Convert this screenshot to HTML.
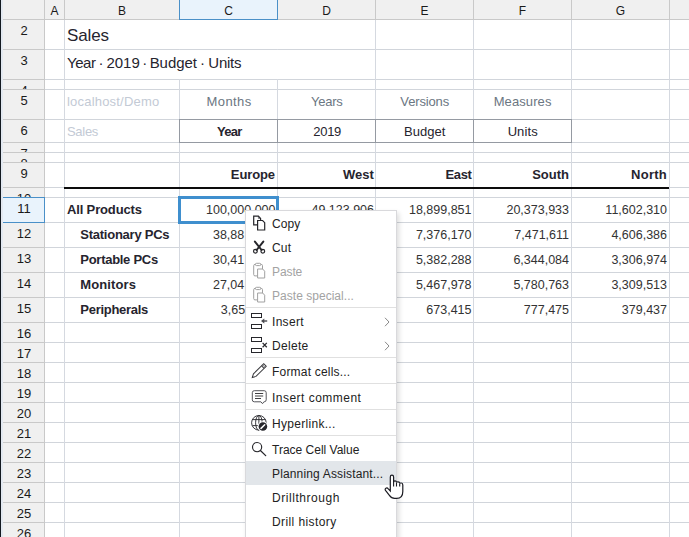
<!DOCTYPE html>
<html><head><meta charset="utf-8"><title>Sales</title>
<style>
html,body{margin:0;padding:0;background:#fff;}
body{width:689px;height:537px;overflow:hidden;position:relative;font-family:"Liberation Sans", sans-serif;color:#222;}
.abs{position:absolute;}
.t{position:absolute;white-space:nowrap;line-height:20px;height:20px;}
.rh{position:absolute;left:3px;width:42px;text-align:center;font-size:13px;color:#1a1a1a;line-height:20px;height:20px;}
.ch{position:absolute;top:1px;text-align:center;font-size:12px;color:#1a1a1a;line-height:20px;height:20px;}
.b{font-weight:bold;}
.mi{position:absolute;left:26px;font-size:12px;color:#222;white-space:nowrap;line-height:20px;height:20px;}
.dis{color:#a3a3a3;}
.sep{position:absolute;left:0;right:0;height:1px;background:#e0e0e0;}
svg{position:absolute;overflow:visible;}

</style></head>
<body>
<div class="abs" style="left:0;top:0;width:689px;height:19px;background:#f0f0f0"></div>
<div class="abs" style="left:0;top:0;width:44px;height:537px;background:#f0f0f0"></div>
<div class="abs" style="left:45px;top:19px;width:644px;height:1px;background:#d1d5db"></div>
<div class="abs" style="left:3px;top:19px;width:41px;height:1px;background:#c9c9c9"></div>
<div class="abs" style="left:45px;top:49px;width:644px;height:1px;background:#d1d5db"></div>
<div class="abs" style="left:3px;top:49px;width:41px;height:1px;background:#c9c9c9"></div>
<div class="abs" style="left:45px;top:79px;width:644px;height:1px;background:#d1d5db"></div>
<div class="abs" style="left:3px;top:79px;width:41px;height:1px;background:#c9c9c9"></div>
<div class="abs" style="left:45px;top:89px;width:644px;height:1px;background:#d1d5db"></div>
<div class="abs" style="left:3px;top:89px;width:41px;height:1px;background:#c9c9c9"></div>
<div class="abs" style="left:45px;top:119px;width:644px;height:1px;background:#d1d5db"></div>
<div class="abs" style="left:3px;top:119px;width:41px;height:1px;background:#c9c9c9"></div>
<div class="abs" style="left:45px;top:142px;width:644px;height:1px;background:#d1d5db"></div>
<div class="abs" style="left:3px;top:142px;width:41px;height:1px;background:#c9c9c9"></div>
<div class="abs" style="left:45px;top:152px;width:644px;height:1px;background:#d1d5db"></div>
<div class="abs" style="left:3px;top:152px;width:41px;height:1px;background:#c9c9c9"></div>
<div class="abs" style="left:45px;top:162px;width:644px;height:1px;background:#d1d5db"></div>
<div class="abs" style="left:3px;top:162px;width:41px;height:1px;background:#c9c9c9"></div>
<div class="abs" style="left:45px;top:187px;width:644px;height:1px;background:#d1d5db"></div>
<div class="abs" style="left:3px;top:187px;width:41px;height:1px;background:#c9c9c9"></div>
<div class="abs" style="left:45px;top:197px;width:644px;height:1px;background:#d1d5db"></div>
<div class="abs" style="left:3px;top:197px;width:41px;height:1px;background:#c9c9c9"></div>
<div class="abs" style="left:45px;top:222px;width:644px;height:1px;background:#d1d5db"></div>
<div class="abs" style="left:3px;top:222px;width:41px;height:1px;background:#c9c9c9"></div>
<div class="abs" style="left:45px;top:247px;width:644px;height:1px;background:#d1d5db"></div>
<div class="abs" style="left:3px;top:247px;width:41px;height:1px;background:#c9c9c9"></div>
<div class="abs" style="left:45px;top:272px;width:644px;height:1px;background:#d1d5db"></div>
<div class="abs" style="left:3px;top:272px;width:41px;height:1px;background:#c9c9c9"></div>
<div class="abs" style="left:45px;top:297px;width:644px;height:1px;background:#d1d5db"></div>
<div class="abs" style="left:3px;top:297px;width:41px;height:1px;background:#c9c9c9"></div>
<div class="abs" style="left:45px;top:322px;width:644px;height:1px;background:#d1d5db"></div>
<div class="abs" style="left:3px;top:322px;width:41px;height:1px;background:#c9c9c9"></div>
<div class="abs" style="left:45px;top:342px;width:644px;height:1px;background:#d1d5db"></div>
<div class="abs" style="left:3px;top:342px;width:41px;height:1px;background:#c9c9c9"></div>
<div class="abs" style="left:45px;top:362px;width:644px;height:1px;background:#d1d5db"></div>
<div class="abs" style="left:3px;top:362px;width:41px;height:1px;background:#c9c9c9"></div>
<div class="abs" style="left:45px;top:382px;width:644px;height:1px;background:#d1d5db"></div>
<div class="abs" style="left:3px;top:382px;width:41px;height:1px;background:#c9c9c9"></div>
<div class="abs" style="left:45px;top:402px;width:644px;height:1px;background:#d1d5db"></div>
<div class="abs" style="left:3px;top:402px;width:41px;height:1px;background:#c9c9c9"></div>
<div class="abs" style="left:45px;top:422px;width:644px;height:1px;background:#d1d5db"></div>
<div class="abs" style="left:3px;top:422px;width:41px;height:1px;background:#c9c9c9"></div>
<div class="abs" style="left:45px;top:442px;width:644px;height:1px;background:#d1d5db"></div>
<div class="abs" style="left:3px;top:442px;width:41px;height:1px;background:#c9c9c9"></div>
<div class="abs" style="left:45px;top:462px;width:644px;height:1px;background:#d1d5db"></div>
<div class="abs" style="left:3px;top:462px;width:41px;height:1px;background:#c9c9c9"></div>
<div class="abs" style="left:45px;top:482px;width:644px;height:1px;background:#d1d5db"></div>
<div class="abs" style="left:3px;top:482px;width:41px;height:1px;background:#c9c9c9"></div>
<div class="abs" style="left:45px;top:502px;width:644px;height:1px;background:#d1d5db"></div>
<div class="abs" style="left:3px;top:502px;width:41px;height:1px;background:#c9c9c9"></div>
<div class="abs" style="left:45px;top:522px;width:644px;height:1px;background:#d1d5db"></div>
<div class="abs" style="left:3px;top:522px;width:41px;height:1px;background:#c9c9c9"></div>
<div class="abs" style="left:3px;top:19px;width:689px;height:1px;background:#c9c9c9"></div>
<div class="abs" style="left:64px;top:20px;width:1px;height:537px;background:#d5d9e0"></div>
<div class="abs" style="left:64px;top:0;width:1px;height:19px;background:#c9c9c9"></div>
<div class="abs" style="left:179px;top:20px;width:1px;height:537px;background:#d5d9e0"></div>
<div class="abs" style="left:179px;top:0;width:1px;height:19px;background:#c9c9c9"></div>
<div class="abs" style="left:277px;top:20px;width:1px;height:537px;background:#d5d9e0"></div>
<div class="abs" style="left:277px;top:0;width:1px;height:19px;background:#c9c9c9"></div>
<div class="abs" style="left:375px;top:20px;width:1px;height:537px;background:#d5d9e0"></div>
<div class="abs" style="left:375px;top:0;width:1px;height:19px;background:#c9c9c9"></div>
<div class="abs" style="left:473px;top:20px;width:1px;height:537px;background:#d5d9e0"></div>
<div class="abs" style="left:473px;top:0;width:1px;height:19px;background:#c9c9c9"></div>
<div class="abs" style="left:571px;top:20px;width:1px;height:537px;background:#d5d9e0"></div>
<div class="abs" style="left:571px;top:0;width:1px;height:19px;background:#c9c9c9"></div>
<div class="abs" style="left:669px;top:20px;width:1px;height:537px;background:#d5d9e0"></div>
<div class="abs" style="left:669px;top:0;width:1px;height:19px;background:#c9c9c9"></div>
<div class="abs" style="left:44px;top:0;width:1px;height:537px;background:#c9c9c9"></div>
<div class="abs" style="left:65px;top:20px;width:310px;height:29px;background:#fff"></div>
<div class="abs" style="left:65px;top:50px;width:310px;height:29px;background:#fff"></div>
<div class="abs" style="left:0;top:0;width:3px;height:537px;background:#e3e9f1"></div>
<div class="abs" style="left:0;top:0;width:1px;height:537px;background:#131920"></div>
<div class="abs" style="left:179px;top:0;width:97px;height:19px;background:#e9f3fc;border:1px solid #4a90c8;border-top:none"></div>
<div class="ch" style="left:34.5px;width:40px">A</div>
<div class="ch" style="left:102px;width:40px">B</div>
<div class="ch" style="left:208.5px;width:40px">C</div>
<div class="ch" style="left:306.5px;width:40px">D</div>
<div class="ch" style="left:404.5px;width:40px">E</div>
<div class="ch" style="left:502.5px;width:40px">F</div>
<div class="ch" style="left:600.5px;width:40px">G</div>
<div class="abs" style="left:3px;top:197px;width:41px;height:24px;background:#e9f3fc;border:1px solid #4a90c8;border-left:none"></div>
<div class="rh" style="top:21px">2</div>
<div class="rh" style="top:51px">3</div>
<div class="rh" style="top:91px">5</div>
<div class="rh" style="top:121px">6</div>
<div class="rh" style="top:164px">9</div>
<div class="rh" style="top:199px">11</div>
<div class="rh" style="top:224px">12</div>
<div class="rh" style="top:249px">13</div>
<div class="rh" style="top:274px">14</div>
<div class="rh" style="top:299px">15</div>
<div class="rh" style="top:324px">16</div>
<div class="rh" style="top:344px">17</div>
<div class="rh" style="top:364px">18</div>
<div class="rh" style="top:384px">19</div>
<div class="rh" style="top:404px">20</div>
<div class="rh" style="top:424px">21</div>
<div class="rh" style="top:444px">22</div>
<div class="rh" style="top:464px">23</div>
<div class="rh" style="top:484px">24</div>
<div class="rh" style="top:504px">25</div>
<div class="rh" style="top:524px">26</div>
<div class="abs" style="left:3px;top:80px;width:42px;height:9px;overflow:hidden"><div class="rh" style="left:0;top:1px">4</div></div>
<div class="abs" style="left:3px;top:143px;width:42px;height:9px;overflow:hidden"><div class="rh" style="left:0;top:1px">7</div></div>
<div class="abs" style="left:3px;top:153px;width:42px;height:9px;overflow:hidden"><div class="rh" style="left:0;top:1px">8</div></div>
<div class="abs" style="left:3px;top:188px;width:42px;height:9px;overflow:hidden"><div class="rh" style="left:0;top:1px">10</div></div>
<div class="t" style="top:26px;font-size:17px;color:#26242e;letter-spacing:-0.1px;left:67px;">Sales</div>
<div class="t" style="top:53px;font-size:15px;color:#26242e;letter-spacing:-0.05px;word-spacing:-1.6px;left:67px;"><span style="letter-spacing:-0.45px">Year</span><span style="word-spacing:-1.1px"> · </span>2019 · Budget<span style="word-spacing:-0.9px"> · </span><span style="letter-spacing:-0.25px">Units</span></div>
<div class="t" style="top:92px;font-size:13px;color:#c3cad5;letter-spacing:0.2px;left:67px;">localhost/Demo</div>
<div class="t" style="top:122px;font-size:13px;color:#c3cad5;letter-spacing:-0.3px;left:67px;">Sales</div>
<div class="t" style="top:92px;font-size:13px;color:#6b7682;letter-spacing:0.4px;left:169.1px;width:120px;text-align:center;">Months</div>
<div class="t" style="top:92px;font-size:13px;color:#6b7682;letter-spacing:-0.2px;left:266.8px;width:120px;text-align:center;">Years</div>
<div class="t" style="top:92px;font-size:13px;color:#6b7682;letter-spacing:-0.15px;left:364.7px;width:120px;text-align:center;">Versions</div>
<div class="t" style="top:92px;font-size:13px;color:#6b7682;letter-spacing:0.1px;left:462.6px;width:120px;text-align:center;">Measures</div>
<div class="abs" style="left:179px;top:119px;width:393px;height:24px;border:1px solid #959aa2;box-sizing:border-box"></div>
<div class="abs" style="left:277px;top:119px;width:1px;height:24px;background:#959aa2"></div>
<div class="abs" style="left:375px;top:119px;width:1px;height:24px;background:#959aa2"></div>
<div class="abs" style="left:473px;top:119px;width:1px;height:24px;background:#959aa2"></div>
<div class="t" style="top:122px;font-size:13px;color:#26242e;letter-spacing:-0.7px;font-weight:bold;left:169.4px;width:120px;text-align:center;">Year</div>
<div class="t" style="top:122px;font-size:13px;color:#26242e;letter-spacing:-0.3px;left:267.2px;width:120px;text-align:center;">2019</div>
<div class="t" style="top:122px;font-size:13px;color:#26242e;letter-spacing:0.05px;left:364.7px;width:120px;text-align:center;">Budget</div>
<div class="t" style="top:122px;font-size:13px;color:#26242e;letter-spacing:0.1px;left:462.70000000000005px;width:120px;text-align:center;">Units</div>
<div class="t" style="top:165px;font-size:13px;color:#26242e;letter-spacing:-0.1px;font-weight:bold;right:414px;">Europe</div>
<div class="t" style="top:165px;font-size:13px;color:#26242e;font-weight:bold;right:315.2px;">West</div>
<div class="t" style="top:165px;font-size:13px;color:#26242e;letter-spacing:-0.35px;font-weight:bold;right:217.5px;">East</div>
<div class="t" style="top:165px;font-size:13px;color:#26242e;font-weight:bold;right:120px;">South</div>
<div class="t" style="top:165px;font-size:13px;color:#26242e;letter-spacing:0.25px;font-weight:bold;right:22px;">North</div>
<div class="abs" style="left:64px;top:187px;width:605px;height:2px;background:#0c0c0c"></div>
<div class="t" style="top:200px;font-size:13px;color:#26242e;letter-spacing:-0.15px;font-weight:bold;left:67.0px;">All Products</div>
<div class="t" style="top:200px;font-size:12.5px;color:#333;right:413.5px;">100,000,000</div>
<div class="t" style="top:200px;font-size:12.5px;color:#333;right:315px;">49,123,906</div>
<div class="t" style="top:200px;font-size:12.5px;color:#333;right:217.5px;">18,899,851</div>
<div class="t" style="top:200px;font-size:12.5px;color:#333;right:120px;">20,373,933</div>
<div class="t" style="top:200px;font-size:12.5px;color:#333;right:22px;">11,602,310</div>
<div class="t" style="top:225px;font-size:13px;color:#26242e;letter-spacing:-0.25px;font-weight:bold;left:80.3px;">Stationary PCs</div>
<div class="t" style="top:225px;font-size:12.5px;color:#333;left:212.94px;">38,88</div>
<div class="t" style="top:225px;font-size:12.5px;color:#333;right:217.5px;">7,376,170</div>
<div class="t" style="top:225px;font-size:12.5px;color:#333;right:120px;">7,471,611</div>
<div class="t" style="top:225px;font-size:12.5px;color:#333;right:22px;">4,606,386</div>
<div class="t" style="top:250px;font-size:13px;color:#26242e;letter-spacing:-0.28px;font-weight:bold;left:80.3px;">Portable PCs</div>
<div class="t" style="top:250px;font-size:12.5px;color:#333;left:212.94px;">30,41</div>
<div class="t" style="top:250px;font-size:12.5px;color:#333;right:217.5px;">5,382,288</div>
<div class="t" style="top:250px;font-size:12.5px;color:#333;right:120px;">6,344,084</div>
<div class="t" style="top:250px;font-size:12.5px;color:#333;right:22px;">3,306,974</div>
<div class="t" style="top:275px;font-size:13px;color:#26242e;letter-spacing:0.1px;font-weight:bold;left:80.3px;">Monitors</div>
<div class="t" style="top:275px;font-size:12.5px;color:#333;left:212.94px;">27,04</div>
<div class="t" style="top:275px;font-size:12.5px;color:#333;right:217.5px;">5,467,978</div>
<div class="t" style="top:275px;font-size:12.5px;color:#333;right:120px;">5,780,763</div>
<div class="t" style="top:275px;font-size:12.5px;color:#333;right:22px;">3,309,513</div>
<div class="t" style="top:300px;font-size:13px;color:#26242e;letter-spacing:-0.28px;font-weight:bold;left:80.3px;">Peripherals</div>
<div class="t" style="top:300px;font-size:12.5px;color:#333;left:220.81px;">3,65</div>
<div class="t" style="top:300px;font-size:12.5px;color:#333;right:217.5px;">673,415</div>
<div class="t" style="top:300px;font-size:12.5px;color:#333;right:120px;">777,475</div>
<div class="t" style="top:300px;font-size:12.5px;color:#333;right:22px;">379,437</div>
<div class="abs" style="left:178px;top:196px;width:101px;height:28px;border:3px solid #3f8fce;box-sizing:border-box"></div>
<div class="abs" style="left:245px;top:210px;width:152px;height:340px;background:#fff;border:1px solid #d9d9dc;box-sizing:border-box;box-shadow:2px 3px 5px rgba(0,0,0,0.14)">
<div class="abs" style="left:0;right:0;top:250px;height:24px;background:#e2e6ea"></div>
<div class="sep" style="top:96px"></div>
<div class="sep" style="top:146px"></div>
<div class="sep" style="top:172px"></div>
<div class="sep" style="top:198px"></div>
<div class="sep" style="top:224px"></div>
<div class="mi" style="top:3px;left:26px;letter-spacing:0.1px">Copy</div>
<div class="mi" style="top:27px;left:26px;letter-spacing:0.2px">Cut</div>
<div class="mi dis" style="top:51px;left:26px;letter-spacing:-0.1px">Paste</div>
<div class="mi dis" style="top:75px;left:26px;letter-spacing:0.03px">Paste special...</div>
<div class="mi" style="top:101px;left:26px;letter-spacing:0.3px">Insert</div>
<div class="mi" style="top:125px;left:26px;letter-spacing:0.3px">Delete</div>
<div class="mi" style="top:151px;left:26px;letter-spacing:0.2px">Format cells...</div>
<div class="mi" style="top:177px;left:26px;letter-spacing:0.48px">Insert comment</div>
<div class="mi" style="top:203px;left:26px;letter-spacing:0.3px">Hyperlink...</div>
<div class="mi" style="top:229px;left:26px;letter-spacing:0px">Trace Cell Value</div>
<div class="mi" style="top:253px;left:26px;letter-spacing:0.15px">Planning Assistant...</div>
<div class="mi" style="top:277px;left:26px;letter-spacing:0.55px">Drillthrough</div>
<div class="mi" style="top:301px;left:26px;letter-spacing:0.4px">Drill history</div>
</div>
<svg width="689" height="537" viewBox="0 0 689 537" style="left:0;top:0" fill="none" stroke-linejoin="miter" stroke-linecap="butt">
<path d="M257.5 224.9 H253.7 V216.1 H258.4 L260.6 218.4 V220.3" stroke="#26262b" stroke-width="1.2"/>
<path d="M258.4 216.1 V218.4 H260.6" stroke="#26262b" stroke-width="0.6"/>
<path d="M257.6 220.5 H262.6 L264.7 222.7 V230 H257.6 Z" stroke="#26262b" stroke-width="1.2" fill="#fff"/>
<path d="M254.9 241.6 L261.6 250 M263.3 241.6 L256.6 250" stroke="#26262b" stroke-width="2" stroke-linecap="round"/>
<circle cx="255.4" cy="251.3" r="1.85" stroke="#26262b" stroke-width="1.25"/><circle cx="262.8" cy="251.3" r="1.85" stroke="#26262b" stroke-width="1.25"/>
<g transform="translate(0,0)" stroke="#a0a0a0" stroke-width="1">
<rect x="253.7" y="264.4" width="8.8" height="11.5" rx="1.3"/>
<rect x="255.4" y="263.3" width="5.4" height="2.3" rx="1.1" fill="#fff"/>
<path d="M257.6 269 H262.6 L264.7 271.2 V278 H257.6 Z" fill="#fff"/>
</g>
<g transform="translate(0,24)" stroke="#a0a0a0" stroke-width="1">
<rect x="253.7" y="264.4" width="8.8" height="11.5" rx="1.3"/>
<rect x="255.4" y="263.3" width="5.4" height="2.3" rx="1.1" fill="#fff"/>
<path d="M257.6 269 H262.6 L264.7 271.2 V278 H257.6 Z" fill="#fff"/>
</g>
<rect x="251.5" y="313.5" width="10" height="4" stroke="#26262b" stroke-width="1"/>
<rect x="251.5" y="324.5" width="10" height="4" stroke="#26262b" stroke-width="1"/>
<path d="M263.5 321 H267.2" stroke="#4a4a50" stroke-width="1.4"/><path d="M261 321 L264.3 318.5 V323.5 Z" fill="#4a4a50" stroke="none"/>
<rect x="251.5" y="337.5" width="10" height="4" stroke="#26262b" stroke-width="1"/>
<rect x="251.5" y="348.5" width="10" height="4" stroke="#26262b" stroke-width="1"/>
<path d="M262.6 342.9 L266.8 347.2 M266.8 342.9 L262.6 347.2" stroke="#2a2a2e" stroke-width="1.25"/>
<path d="M385 317.8 L389 322 L385 326.2" stroke="#8a8a8a" stroke-width="1" stroke-linejoin="miter"/>
<path d="M385 341.8 L389 346 L385 350.2" stroke="#8a8a8a" stroke-width="1" stroke-linejoin="miter"/>
<g transform="translate(252.3,377.5) rotate(-44.5)" stroke="#3a3a3e" stroke-width="1"><path d="M0 0 L3.4 -1.8 H17.8 V1.8 H3.4 Z"/><path d="M14.8 -1.8 V1.8" /><path d="M16.2 -1.8 V1.8" stroke-width="0.7"/></g>
<path d="M254.3 390.7 H264.2 a2 2 0 0 1 2 2 V399.8 a2 2 0 0 1 -2 2 H263.9 L262.5 403.7 L260.9 401.8 H254.3 a2 2 0 0 1 -2 -2 V392.7 a2 2 0 0 1 2 -2 Z" stroke="#55555a" stroke-width="1"/>
<path d="M255 393.5 H263.2 M255 396 H263.2 M255 398.5 H261" stroke="#2a2a2e" stroke-width="0.9"/>
<g stroke="#2e2e33" stroke-width="0.95"><circle cx="258.9" cy="422.8" r="7.3"/><ellipse cx="258.9" cy="422.8" rx="3.3" ry="7.3"/><path d="M258.9 415.5 V430.1 M252.4 419.6 H265.4 M252.4 425.6 H265.4"/></g>
<circle cx="262.9" cy="426.5" r="5.3" fill="#fff" stroke="none"/><circle cx="262.9" cy="426.5" r="4.3" fill="#26262b" stroke="none"/>
<path d="M261 428.4 L264.7 424.7" stroke="#fff" stroke-width="1.5" stroke-linecap="round"/>
<circle cx="257.1" cy="447.1" r="4.6" stroke="#26262b" stroke-width="1.15"/><path d="M260.4 450.5 L265.7 455.6" stroke="#26262b" stroke-width="1.3" stroke-linecap="round"/>
<path d="M390.3 490.8 L390.3 476.9 Q390.3 475.2 391.95 475.2 Q393.6 475.2 393.6 476.9 L393.6 482.2 Q393.6 480.9 395.05 480.9 Q396.5 480.9 396.5 482.6 Q396.5 481.8 398.1 481.8 Q399.7 481.8 399.7 483.5 Q399.7 483 401.25 483 Q402.8 483 402.8 484.9 L402.8 491.5 Q402.8 498.4 396.6 498.4 L394.6 498.4 Q391.5 498.4 389.4 495.4 L385.7 490.7 Q384.5 489.1 385.9 488.2 Q387.2 487.5 388.3 488.8 L390.3 490.9 Z" fill="#fff" stroke="#1b1b22" stroke-width="1.2"/>
<path d="M393.6 482 V486.6 M396.5 482.5 V486.6 M399.7 483.4 V486.6" stroke="#1b1b22" stroke-width="1.1"/>
</svg>
</body></html>
